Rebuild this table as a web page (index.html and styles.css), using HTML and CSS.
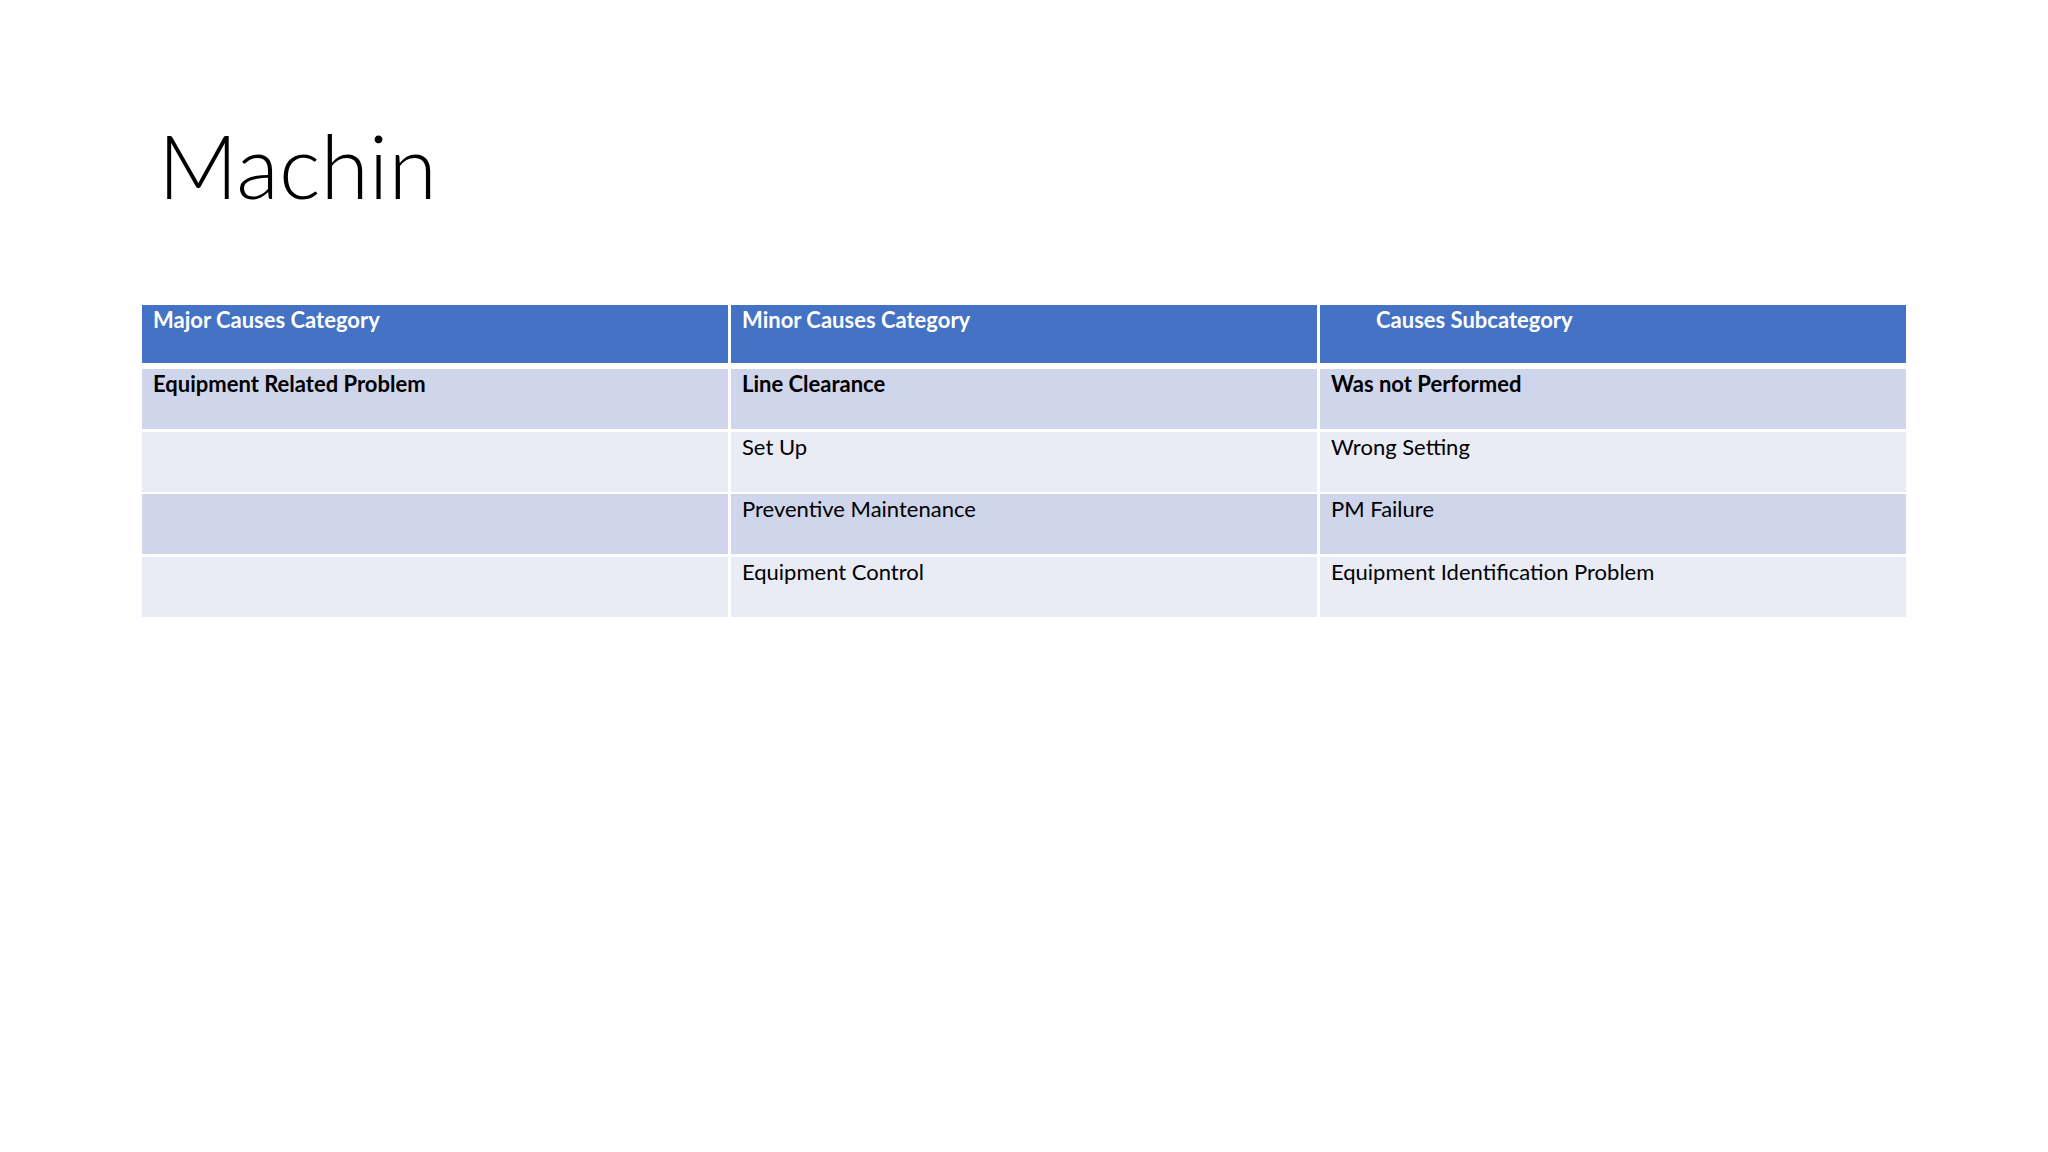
FILE: index.html
```html
<!DOCTYPE html>
<html>
<head>
<meta charset="utf-8">
<title>Machin</title>
<link rel="stylesheet" href="styles.css">
</head>
<body>
<main class="slide">
  <h1 class="title">Machin</h1>
  <div class="table">
    <div class="row head">
      <div class="cell">Major Causes Category</div>
      <div class="cell">Minor Causes Category</div>
      <div class="cell indent">Causes Subcategory</div>
    </div>
    <div class="row odd bold">
      <div class="cell">Equipment Related Problem</div>
      <div class="cell">Line Clearance</div>
      <div class="cell">Was not Performed</div>
    </div>
    <div class="row even">
      <div class="cell"></div>
      <div class="cell">Set Up</div>
      <div class="cell">Wrong Setting</div>
    </div>
    <div class="row odd">
      <div class="cell"></div>
      <div class="cell">Preventive Maintenance</div>
      <div class="cell">PM Failure</div>
    </div>
    <div class="row even">
      <div class="cell"></div>
      <div class="cell">Equipment Control</div>
      <div class="cell">Equipment Identification Problem</div>
    </div>
  </div>
</main>
</body>
</html>
```
FILE: styles.css
```css
html, body {
  margin: 0;
  padding: 0;
  background: #ffffff;
}
.slide {
  width: 2048px;
  height: 1152px;
  padding-top: 121px;
  box-sizing: border-box;
  font-family: Lato, "Liberation Sans", sans-serif;
  color: #000;
}
.title {
  margin: 0 0 96px 158px;
  font-family: Lato, "Liberation Sans", sans-serif;
  font-weight: 300;
  font-size: 88px;
  line-height: 88px;
}
.table {
  margin-left: 142px;
  width: 1764px;
  display: flex;
  flex-direction: column;
  gap: 2.5px;
}
.row {
  display: grid;
  grid-template-columns: repeat(3, minmax(0, 1fr));
  column-gap: 3px;
  height: 60px;
}
.row.head {
  height: 58px;
  margin-bottom: 3.5px;
}
.cell {
  box-sizing: border-box;
  padding: 3px 12px 0 11px;
  font-size: 22px;
  line-height: 24px;
  white-space: nowrap;
}
.head .cell {
  background: #4472c4;
  color: #ffffff;
  font-weight: 700;
}
.head .cell.indent {
  padding-left: 56px;
}
.odd .cell {
  background: #cfd5ea;
}
.even .cell {
  background: #e9ebf5;
}
.bold .cell {
  font-weight: 700;
}
```
